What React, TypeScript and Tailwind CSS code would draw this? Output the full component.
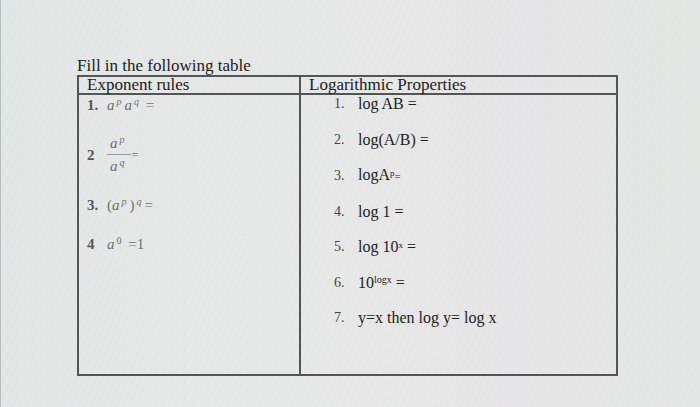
import React from "react";

const LEFT_ROWS = [
  { n: "1.", mt: "mt-[1px]" },
  { n: "2", mt: "mt-[21px]" },
  { n: "3.", mt: "mt-[21px]" },
  { n: "4", mt: "mt-[21px]" },
];

const RIGHT_ROWS: { n: string; body: React.ReactNode }[] = [
  { n: "1.", body: <>log AB =</> },
  { n: "2.", body: <>log(A/B) =</> },
  {
    n: "3.",
    body: (
      <>
        logA<sup className="text-[9px]">p</sup>
        <span className="text-[11px]">=</span>
      </>
    ),
  },
  { n: "4.", body: <>log 1 =</> },
  {
    n: "5.",
    body: (
      <>
        log 10<sup className="text-[9px]">x</sup> =
      </>
    ),
  },
  {
    n: "6.",
    body: (
      <>
        10<sup className="text-[10px]">logx</sup> =
      </>
    ),
  },
  { n: "7.", body: <>y=x then log y= log x</> },
];

function Sup({ children }: { children: React.ReactNode }) {
  return <sup className="text-[10px] italic ml-[2px] mr-[3px]">{children}</sup>;
}

function LeftMath({ i }: { i: number }) {
  if (i === 0)
    return (
      <span>
        <span className="italic">a</span>
        <Sup>p</Sup>
        <span className="italic">a</span>
        <Sup>q</Sup> =
      </span>
    );
  if (i === 1)
    return (
      <span className="inline-flex items-center gap-[1px]">
        <span className="inline-flex flex-col items-center leading-[17px]">
          <span className="border-b border-[#9a9a9a] px-[3px] pb-[2px]">
            <span className="italic">a</span>
            <Sup>p</Sup>
          </span>
          <span className="pt-[3px]">
            <span className="italic">a</span>
            <Sup>q</Sup>
          </span>
        </span>
        <span className="text-[12px]">=</span>
      </span>
    );
  if (i === 2)
    return (
      <span>
        (<span className="italic">a</span>
        <Sup>p</Sup>)<Sup>q</Sup>=
      </span>
    );
  return (
    <span>
      <span className="italic">a</span>
      <sup className="text-[10px] ml-[2px] mr-[3px]">0</sup> =1
    </span>
  );
}

export default function App() {
  return (
    <div className="w-[700px] h-[407px] overflow-hidden border-l border-[#b9bcbc] bg-[repeating-linear-gradient(112deg,rgba(255,205,230,0.25)_0px,rgba(205,242,220,0.25)_3px,rgba(238,228,248,0.25)_6px),linear-gradient(90deg,#e2e6e6_0%,#e8e9e7_45%,#e7e4e6_75%,#e2e7e3_100%)] pt-[56px] pl-[76px] font-['Liberation_Serif',serif] text-[#222]">
      <p className="text-[17px] leading-[19px]">Fill in the following table</p>
      <div className="w-[541px] border-2 border-[#555]">
        <div className="grid grid-cols-[222px_1fr] border-b-2 border-[#555] text-[17px] leading-[16px] h-[18px]">
          <div className="border-r-2 border-[#555] pl-[8px]">Exponent rules</div>
          <div className="pl-[8px]">Logarithmic Properties</div>
        </div>
        <div className="grid grid-cols-[222px_1fr] h-[279px]">
          <div className="border-r-2 border-[#555] pl-[8px] flex flex-col text-[15px] text-[#707070]">
            {LEFT_ROWS.map((r, i) => (
              <div key={i} className={`${r.mt} flex items-center leading-[18px]`}>
                <span className="w-[20px] text-[#555] font-semibold">{r.n}</span>
                <LeftMath i={i} />
              </div>
            ))}
          </div>
          <div className="pl-[33px] flex flex-col gap-[17.5px] text-[16px] leading-[18px]">
            {RIGHT_ROWS.map((r) => (
              <div key={r.n} className="flex items-center">
                <span className="w-[24px] text-[14px] text-[#444]">{r.n}</span>
                <span>{r.body}</span>
              </div>
            ))}
          </div>
        </div>
      </div>
    </div>
  );
}
